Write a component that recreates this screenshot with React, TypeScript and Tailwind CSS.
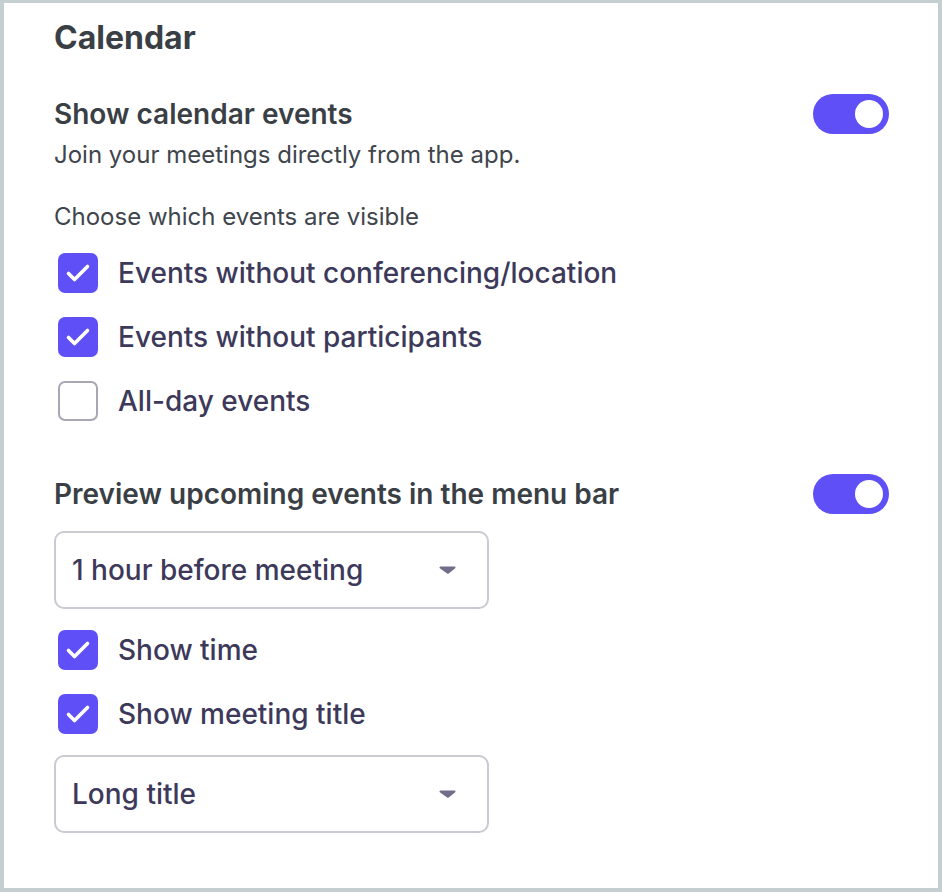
import React from 'react';

function Toggle() {
  return (
    <div className="flex h-[40px] w-[76px] items-center justify-end rounded-full bg-[#5f4ff6] pr-[6px]">
      <div className="h-[28px] w-[28px] rounded-full bg-white" />
    </div>
  );
}

function Check({ checked, label }: { checked: boolean; label: string }) {
  return (
    <div className="flex h-[40px] items-center gap-[20px] pl-[4px]">
      {checked ? (
        <div className="h-[40px] w-[40px] shrink-0 rounded-[7px] bg-[#5f4ff6]">
          <svg width="40" height="40" viewBox="0 0 40 40" fill="none">
            <path d="M10.5 20.5l6 6L29.5 13.5" stroke="white" strokeWidth="3.6" strokeLinecap="round" strokeLinejoin="round" />
          </svg>
        </div>
      ) : (
        <div className="h-[40px] w-[40px] shrink-0 rounded-[7px] border-2 border-[#a9a7b6] bg-white" />
      )}
      <span className="text-[28px] font-medium leading-[34px] text-[#3d395a]">{label}</span>
    </div>
  );
}

function Dropdown({ value }: { value: string }) {
  return (
    <div className="flex h-[78px] w-[435px] items-center justify-between rounded-[10px] border-2 border-[#cbcad2] pl-[16px] pr-[31px]">
      <span className="text-[28px] font-medium leading-[34px] text-[#3d395a]">{value}</span>
      <svg width="17" height="8" viewBox="0 0 17 8">
        <path d="M1.5 0.5h14a1 1 0 0 1 0.7 1.7l-6.5 5.2a1.2 1.2 0 0 1-1.6 0L0.8 2.2A1 1 0 0 1 1.5 0.5z" fill="#736d8c" />
      </svg>
    </div>
  );
}

export default function App() {
  return (
    <div
      className="h-[892px] w-[942px] border-4 border-t-[3px] border-[#c5ced0] bg-white pl-[50px] pr-[49px] pt-[17px]"
      style={{ fontFamily: 'Inter, "Noto Sans", sans-serif' }}
    >
      <h1 className="text-[32px] font-bold leading-[36px] text-[#3a3f46]">Calendar</h1>

      <div className="mt-[38px] flex h-[40px] items-center justify-between">
        <span className="text-[28px] font-semibold text-[#3a3f46]">Show calendar events</span>
        <Toggle />
      </div>
      <p className="mt-[7px] text-[24px] leading-[28px] text-[#40454c]">Join your meetings directly from the app.</p>
      <p className="mt-[34px] text-[24px] leading-[28px] text-[#40454c]">Choose which events are visible</p>

      <div className="mt-[22px] flex flex-col gap-[24px]">
        <Check checked label="Events without conferencing/location" />
        <Check checked label="Events without participants" />
        <Check checked={false} label="All-day events" />
      </div>

      <div className="mt-[53px] flex h-[40px] items-center justify-between">
        <span className="text-[28px] font-semibold text-[#3a3f46]">Preview upcoming events in the menu bar</span>
        <Toggle />
      </div>

      <div className="mt-[17px]">
        <Dropdown value="1 hour before meeting" />
      </div>

      <div className="mt-[21px] flex flex-col gap-[24px]">
        <Check checked label="Show time" />
        <Check checked label="Show meeting title" />
      </div>

      <div className="mt-[21px]">
        <Dropdown value="Long title" />
      </div>
    </div>
  );
}
